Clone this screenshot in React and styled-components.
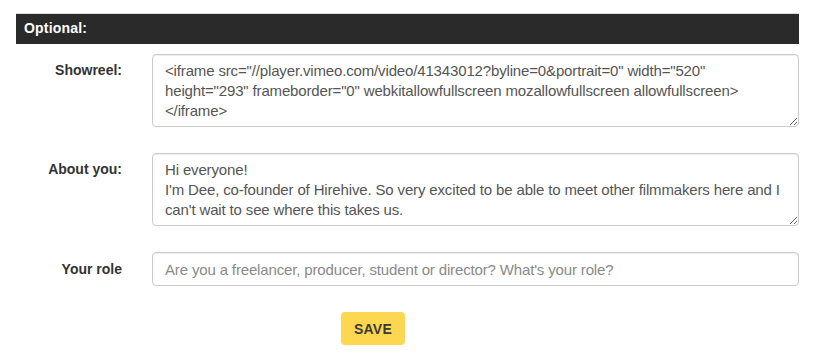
import React from "react";
import styled, { createGlobalStyle } from "styled-components";

const GlobalStyle = createGlobalStyle`
	html, body {
		margin: 0;
		padding: 0;
		background: #ffffff;
	}

	body {
		font-family: "Liberation Sans", Arial, sans-serif;
		font-size: 14px;
		color: #333333;
	}
`;

const showreel =
	'<iframe src="//player.vimeo.com/video/41343012?byline=0&portrait=0" width="520" height="293" frameborder="0" webkitallowfullscreen mozallowfullscreen allowfullscreen></iframe>';

const about =
	"Hi everyone!\nI'm Dee, co-founder of Hirehive. So very excited to be able to meet other filmmakers here and I can't wait to see where this takes us.";

function App() {
	return (
		<>
			<GlobalStyle />
			<Page>
				<SectionHeader>Optional:</SectionHeader>
				<Form onSubmit={(e) => e.preventDefault()}>
					<Row>
						<Label htmlFor="showreel">Showreel:</Label>
						<TextArea id="showreel" defaultValue={showreel} />
					</Row>
					<Row>
						<Label htmlFor="about">About you:</Label>
						<TextArea id="about" defaultValue={about} />
					</Row>
					<Row>
						<Label htmlFor="role" $top={7}>Your role</Label>
						<Input
							id="role"
							type="text"
							placeholder="Are you a freelancer, producer, student or director? What's your role?"
						/>
					</Row>
					<Actions>
						<SaveButton type="submit">SAVE</SaveButton>
					</Actions>
				</Form>
			</Page>
		</>
	);
}

export default App;

const Page = styled.div`
	padding: 13px 18px 0 16px;
	width: 783px;
`;

const SectionHeader = styled.div`
	height: 31px;
	box-sizing: border-box;
	border-top: 1px solid #dcdcdc;
	background-color: #2a2a2a;
	color: #ffffff;
	font-weight: bold;
	font-size: 14px;
	line-height: 29px;
	padding-left: 8px;
	letter-spacing: 0.2px;
`;

const Form = styled.form`
	display: flex;
	flex-direction: column;
	gap: 26px;
	padding-top: 10px;
`;

const Row = styled.div`
	display: grid;
	grid-template-columns: 136px 1fr;
	align-items: start;
`;

const Label = styled.label`
	text-align: right;
	padding-right: 30px;
	padding-top: ${(p) => p.$top ?? 6}px;
	line-height: 20px;
	font-weight: bold;
	font-size: 14px;
	color: #333333;
`;

const fieldBase = `
	box-sizing: border-box;
	width: 100%;
	margin: 0;
	border: 1px solid #cccccc;
	border-radius: 4px;
	box-shadow: inset 0 1px 1px rgba(0, 0, 0, 0.075);
	font-family: "Liberation Sans", Arial, sans-serif;
	font-size: 15px;
	line-height: 20px;
	letter-spacing: -0.15px;
	color: #555555;
	background: #ffffff;
	outline: none;
`;

const TextArea = styled.textarea`
	${fieldBase}
	display: block;
	height: 73px;
	padding: 6px 12px;
	resize: vertical;
	overflow: hidden;
`;

const Input = styled.input`
	${fieldBase}
	height: 34px;
	padding: 6px 12px;

	&::placeholder {
		color: #8a8a8a;
	}
`;

const Actions = styled.div`
	display: flex;
	padding-left: 325px;
`;

const SaveButton = styled.button`
	width: 64px;
	height: 33px;
	border: none;
	border-radius: 4px;
	background-color: #fdd74f;
	color: #3a3a3a;
	font-family: "Liberation Sans", Arial, sans-serif;
	font-weight: bold;
	font-size: 14px;
	letter-spacing: 0.2px;
	cursor: pointer;
`;
